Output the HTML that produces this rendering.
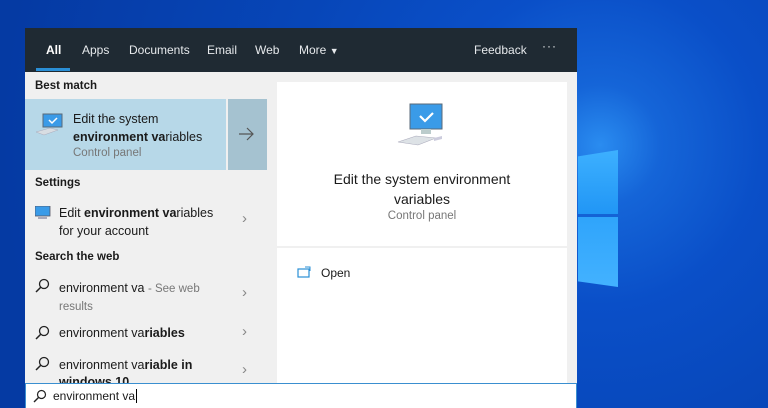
<!DOCTYPE html>
<html><head><style>
*{margin:0;padding:0;box-sizing:border-box}
body{width:768px;height:408px;overflow:hidden;position:relative;font-family:"Liberation Sans",sans-serif;
background:radial-gradient(circle at 600px 145px,#2a8cf0 0,#1565d8 60px,#0a4fc8 160px,#0746b8 320px,#053aa3 600px);}
.abs{position:absolute}
.nav{color:#e6e9ec;font-size:12px;top:43px}
.lbl{font-size:11.5px;font-weight:bold;color:#1a1a1a;left:35px}
.t{font-size:12.5px;color:#1a1a1a}
.g{color:#777}
.chev{color:#888;font-size:15px;left:242px}
</style></head><body>
<div class="abs" style="left:578px;top:150px;width:40px;height:64px;background:linear-gradient(180deg,#3db0ff,#2196f5);clip-path:polygon(0 10%,100% 0,100% 100%,0 100%)"></div>
<div class="abs" style="left:578px;top:217px;width:40px;height:70px;background:linear-gradient(180deg,#2fa4fb,#43b2ff);clip-path:polygon(0 0,100% 0,100% 100%,0 92%)"></div>

<div class="abs" style="left:25px;top:28px;width:552px;height:380px;background:#f0f0f0"></div>
<div class="abs" style="left:25px;top:28px;width:552px;height:44px;background:#1f2a33"></div>
<div class="abs nav" style="left:46px;font-weight:bold;color:#fff">All</div>
<div class="abs" style="left:36px;top:68px;width:34px;height:3px;background:#2a8fd6"></div>
<div class="abs nav" style="left:82px">Apps</div>
<div class="abs nav" style="left:129px">Documents</div>
<div class="abs nav" style="left:207px">Email</div>
<div class="abs nav" style="left:255px">Web</div>
<div class="abs nav" style="left:299px">More <span style="font-size:9px">&#9660;</span></div>
<div class="abs nav" style="left:474px">Feedback</div>
<div class="abs nav" style="left:542px;top:39px;letter-spacing:1px">···</div>

<div class="abs lbl" style="top:80px">Best match</div>
<div class="abs" style="left:25px;top:99px;width:201px;height:71px;background:#b7d8e8"></div>
<div class="abs" style="left:228px;top:99px;width:39px;height:71px;background:#a5c2d0"></div>
<svg class="abs" style="left:238px;top:127px" width="16" height="14"><path d="M1 7h14M9 1l6 6-6 6" stroke="#555" fill="none" stroke-width="1.2"/></svg>
<svg class="abs" style="left:34px;top:112px" width="30" height="26" viewBox="0 0 30 26"><rect x="9" y="2" width="19" height="13" fill="#3a9be8" stroke="#5a6a78" stroke-width="1"/><path d="M15 8l3 3 5-5" stroke="#fff" fill="none" stroke-width="1.5"/><path d="M2 20l14-4 8 2-14 5z" fill="#d8dde2" stroke="#aab" stroke-width=".5"/></svg>
<div class="abs t" style="left:73px;top:110px;line-height:18px">Edit the system<br><b>environment va</b>riables</div>
<div class="abs g" style="left:73px;top:147px;font-size:11.5px">Control panel</div>

<div class="abs lbl" style="top:177px">Settings</div>
<svg class="abs" style="left:35px;top:206px" width="16" height="13"><rect x="0" y="0" width="15" height="10" fill="#3a9be8" stroke="#556" stroke-width=".8"/><rect x="3" y="11" width="9" height="2" fill="#aab"/></svg>
<div class="abs t" style="left:59px;top:204px;line-height:18px">Edit <b>environment va</b>riables<br>for your account</div>
<div class="abs chev" style="top:210px">&#8250;</div>

<div class="abs lbl" style="top:251px">Search the web</div>
<svg class="abs" style="left:35px;top:278px" width="15" height="15"><circle cx="9" cy="6" r="4.5" fill="none" stroke="#222" stroke-width="1.3"/><path d="M6 9L1 14" stroke="#222" stroke-width="1.5"/></svg>
<div class="abs t" style="left:59px;top:280px;line-height:17px">environment va <span class="g" style="font-size:11.5px">- See web</span><br><span class="g" style="font-size:11.5px">results</span></div>
<div class="abs chev" style="top:284px">&#8250;</div>
<svg class="abs" style="left:35px;top:325px" width="15" height="15"><circle cx="9" cy="6" r="4.5" fill="none" stroke="#222" stroke-width="1.3"/><path d="M6 9L1 14" stroke="#222" stroke-width="1.5"/></svg>
<div class="abs t" style="left:59px;top:326px">environment va<b>riables</b></div>
<div class="abs chev" style="top:323px">&#8250;</div>
<svg class="abs" style="left:35px;top:356px" width="15" height="15"><circle cx="9" cy="6" r="4.5" fill="none" stroke="#222" stroke-width="1.3"/><path d="M6 9L1 14" stroke="#222" stroke-width="1.5"/></svg>
<div class="abs t" style="left:59px;top:357px;line-height:17px">environment va<b>riable in<br>windows 10</b></div>
<div class="abs chev" style="top:361px">&#8250;</div>

<div class="abs" style="left:277px;top:82px;width:290px;height:301px;background:#fff"></div>
<div class="abs" style="left:277px;top:246px;width:290px;height:2px;background:#f0f0f0"></div>
<svg class="abs" style="left:396px;top:102px" width="54" height="48" viewBox="0 0 54 48"><rect x="14" y="2" width="32" height="25" fill="#3a9be8" stroke="#5a6a78"/><path d="M24 14l5 5 8-8" stroke="#fff" fill="none" stroke-width="2.2"/><rect x="25" y="27" width="10" height="5" fill="#bcc"/><path d="M2 40l18-6 20 2-18 7z" fill="#dde2e6" stroke="#aab" stroke-width=".6"/><path d="M38 36l8-2 0 3-8 2z" fill="#ccd"/></svg>
<div class="abs" style="left:277px;top:169px;width:290px;text-align:center;font-size:14px;color:#1a1a1a;line-height:20px">Edit the system environment<br>variables</div>
<div class="abs g" style="left:277px;top:210px;width:290px;text-align:center;font-size:11.5px">Control panel</div>
<svg class="abs" style="left:297px;top:266px" width="14" height="12"><rect x="1" y="3" width="11" height="8" fill="none" stroke="#2a8fd6" stroke-width="1.2"/><path d="M8 1h5v4" stroke="#2a8fd6" fill="none"/></svg>
<div class="abs t" style="left:321px;top:266px;font-size:12px">Open</div>

<div class="abs" style="left:25px;top:383px;width:552px;height:25px;background:#fff;border:1.5px solid #3a8fd0;border-bottom:none"></div>
<svg class="abs" style="left:33px;top:389px" width="14" height="14"><circle cx="8.5" cy="5.5" r="4" fill="none" stroke="#222" stroke-width="1.2"/><path d="M5.5 8.5L1 13" stroke="#222" stroke-width="1.4"/></svg>
<div class="abs t" style="left:53px;top:389px;font-size:12px">environment va<span style="border-left:1px solid #000;margin-left:1px"></span></div>
</body></html>
